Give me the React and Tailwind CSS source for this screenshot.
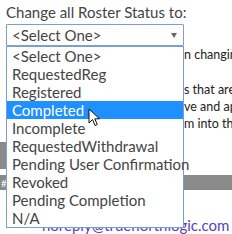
import React from "react";

const items = [
  "<Select One>",
  "RequestedReg",
  "Registered",
  "Completed",
  "Incomplete",
  "RequestedWithdrawal",
  "Pending User Confirmation",
  "Revoked",
  "Pending Completion",
  "N/A",
];

export default function App() {
  return (
    <div
      className="relative w-[232px] h-[234px] overflow-hidden bg-white"
      style={{ fontFamily: "Lato, 'Open Sans', sans-serif" }}
    >
      <div className="flex flex-col">
        <div className="ml-[6px] mt-[2px] h-[20px] text-[15px] leading-[20px] text-[#444] whitespace-nowrap">
          Change all Roster Status to:
        </div>
        <div className="ml-[6px] mt-[2px] w-[178px] h-[22px] border border-[#7b9ed6] rounded-[1px] flex items-center justify-between pl-[5px] pr-[6px] text-[15px] text-[#444]">
          <span>&lt;Select One&gt;</span>
          <span className="block w-0 h-0 border-l-[3px] border-r-[3px] border-t-[5px] border-l-transparent border-r-transparent border-t-[#666]" />
        </div>
        <div className="flex flex-col ml-[184px] mt-0 text-[12.5px] text-[#222] whitespace-nowrap">
          <div className="h-[18px] leading-[18px]">n changing</div>
          <div className="h-[17px]" />
          <div className="h-[17px] leading-[17px]">s that are</div>
          <div className="h-[17px] leading-[17px]">ve and app</div>
          <div className="h-[17px] leading-[17px]">m into the</div>
        </div>
        <div className="mt-[10px] w-[100px] h-[27px] bg-[#8a8a8a]" />
        <div className="mt-[6px] h-[15px] bg-[#8a8a8a] flex items-center pl-[1px] text-[10px] text-white leading-none">
          #
        </div>
        <div className="mt-[27px] ml-[42px] text-[15px] leading-[16px] text-[#5a3fc0] whitespace-nowrap">
          noreply@truenorthlogic.com
        </div>
      </div>

      <div className="absolute left-[6px] top-[46px] w-[178px] h-[182px] border border-[#7b9ed6] bg-white flex flex-col">
        {items.map((it) => (
          <div
            key={it}
            className={
              "h-[18px] leading-[18px] pl-[5px] text-[15px] whitespace-nowrap " +
              (it === "Completed" ? "bg-[#1e90ff] text-white" : "text-[#444]")
            }
          >
            {it}
          </div>
        ))}
      </div>

      <svg
        className="absolute left-[88px] top-[108px]"
        width="14"
        height="20"
        viewBox="0 0 14 20"
      >
        <path
          d="M1 1 L1 15 L4.5 11.5 L7 17.5 L9.3 16.5 L6.8 10.8 L11.5 10.8 Z"
          fill="white"
          stroke="#111"
          strokeWidth="1"
          strokeLinejoin="round"
        />
      </svg>
    </div>
  );
}
